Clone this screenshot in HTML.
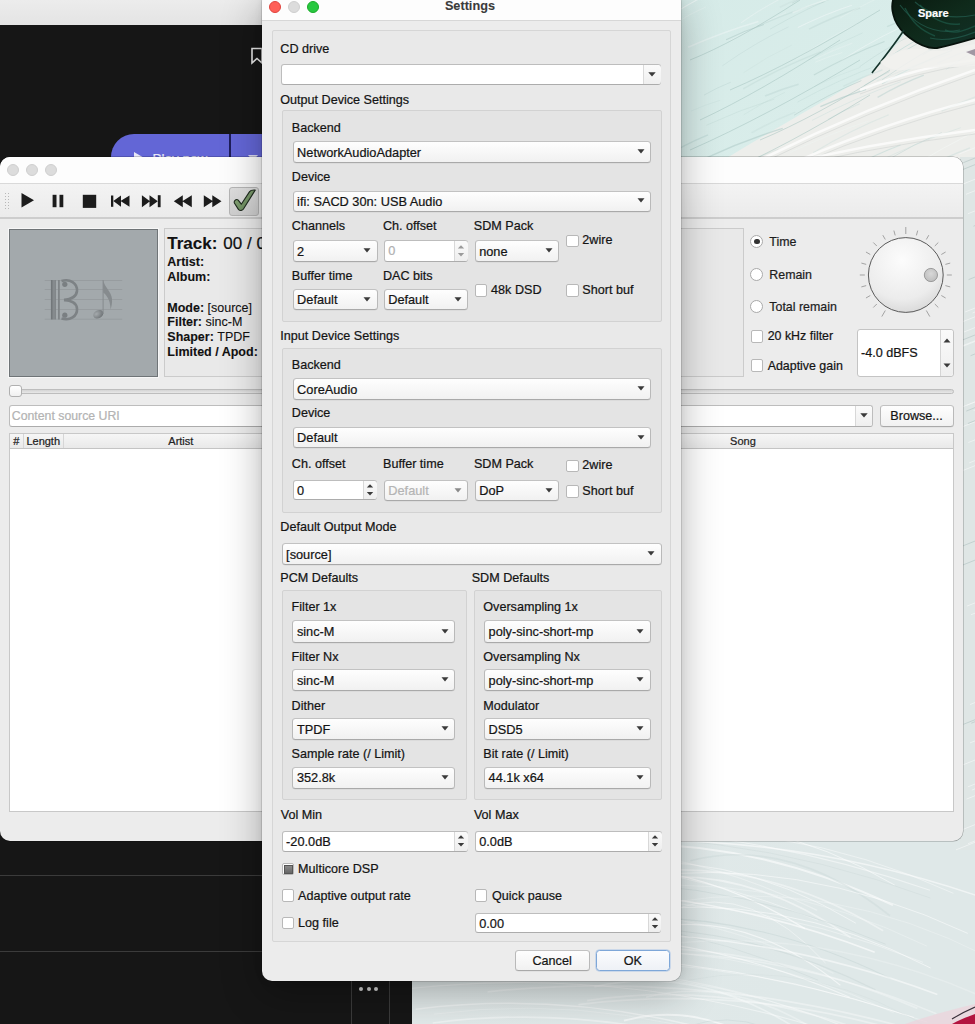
<!DOCTYPE html><html><head><meta charset="utf-8"><style>
html,body{margin:0;padding:0;width:975px;height:1024px;overflow:hidden;position:relative;background:#dfe9e8;font-family:"Liberation Sans",sans-serif}
.a{position:absolute}
.t{position:absolute;white-space:nowrap;line-height:20px;font-family:"Liberation Sans",sans-serif;-webkit-text-stroke:0.22px currentColor}
.cb{box-sizing:border-box;border:1px solid #b9b9b9;border-top-color:#c2c2c2;border-bottom-color:#a9a9a9;border-radius:3.5px;background:linear-gradient(#fefefe,#f1f1f1);box-shadow:0 0.5px 0.5px rgba(0,0,0,0.08)}
.ed{box-sizing:border-box;border:1px solid #bdbdbd;border-bottom-color:#acacac;border-radius:3px;background:#fff}
.ck{width:12.5px;height:12.5px;box-sizing:border-box;border:1px solid #b8b8b8;border-radius:2px;background:#fff}
</style></head><body>

<svg class="a" style="left:0;top:0" width="975" height="1024" viewBox="0 0 975 1024"><defs><linearGradient id="bgtop" x1="0" y1="0" x2="1" y2="1"><stop offset="0" stop-color="#d6ebe8"/><stop offset="1" stop-color="#dbeeeb"/></linearGradient><linearGradient id="bgbot" x1="0" y1="0" x2="1" y2="0.3"><stop offset="0" stop-color="#d9e3e3"/><stop offset="0.5" stop-color="#e4ebeb"/><stop offset="1" stop-color="#dfe8e8"/></linearGradient><linearGradient id="green" x1="0" y1="0" x2="1" y2="1"><stop offset="0" stop-color="#0a1a10"/><stop offset="0.5" stop-color="#0f2a1b"/><stop offset="1" stop-color="#123028"/></linearGradient></defs><rect x="0" y="0" width="975" height="1024" fill="url(#bgbot)"/><rect x="660" y="0" width="315" height="200" fill="#edeeeb"/><path d="M660 0H895C893 14 898 26 906 33L872 73C840 92 790 120 740 150C715 165 690 180 660 195Z" fill="url(#bgtop)"/><path d="M960 157V850H975V157Z" fill="#dfe6e5"/><path d="M757.1 26.4 q33.7 -14.9 67.3 -24.8" stroke="#b4cecb" stroke-width="1.2" fill="none" opacity="0.33"/><path d="M932.9 37.6 q15.3 -8.3 30.6 -13.9" stroke="#c4dbd8" stroke-width="1.0" fill="none" opacity="0.33"/><path d="M908.1 21.7 q19.8 -12.0 39.5 -20.0" stroke="#bcd6d3" stroke-width="1.0" fill="none" opacity="0.50"/><path d="M952.9 8.2 q40.4 -20.5 80.8 -34.1" stroke="#c4dbd8" stroke-width="1.2" fill="none" opacity="0.49"/><path d="M828.1 119.4 q15.8 -9.4 31.7 -15.6" stroke="#c4dbd8" stroke-width="1.1" fill="none" opacity="0.43"/><path d="M678.8 10.4 q19.2 -12.0 38.4 -20.0" stroke="#f6faf9" stroke-width="1.1" fill="none" opacity="0.57"/><path d="M937.0 63.3 q20.6 -9.8 41.1 -16.3" stroke="#c4dbd8" stroke-width="0.9" fill="none" opacity="0.33"/><path d="M808.5 60.1 q27.1 -16.3 54.2 -27.2" stroke="#bcd6d3" stroke-width="1.0" fill="none" opacity="0.34"/><path d="M887.1 26.6 q28.4 -12.3 56.8 -20.4" stroke="#bcd6d3" stroke-width="1.2" fill="none" opacity="0.57"/><path d="M922.6 54.9 q35.1 -21.0 70.2 -35.0" stroke="#b4cecb" stroke-width="0.7" fill="none" opacity="0.58"/><path d="M688.1 47.2 q35.2 -15.5 70.3 -25.8" stroke="#eef6f5" stroke-width="1.6" fill="none" opacity="0.53"/><path d="M906.6 49.8 q25.0 -15.5 50.1 -25.9" stroke="#bcd6d3" stroke-width="1.0" fill="none" opacity="0.63"/><path d="M843.3 86.4 q19.6 -9.9 39.2 -16.5" stroke="#c4dbd8" stroke-width="1.5" fill="none" opacity="0.44"/><path d="M809.0 29.1 q25.6 -12.9 51.1 -21.4" stroke="#c4dbd8" stroke-width="1.5" fill="none" opacity="0.59"/><path d="M743.5 72.7 q24.2 -16.6 48.3 -27.6" stroke="#c4dbd8" stroke-width="0.8" fill="none" opacity="0.35"/><path d="M729.6 40.8 q28.3 -16.9 56.5 -28.1" stroke="#eef6f5" stroke-width="0.7" fill="none" opacity="0.40"/><path d="M820.4 106.7 q22.9 -10.5 45.7 -17.4" stroke="#b4cecb" stroke-width="1.3" fill="none" opacity="0.63"/><path d="M881.9 79.9 q40.8 -28.8 81.6 -48.0" stroke="#b4cecb" stroke-width="1.0" fill="none" opacity="0.44"/><path d="M691.1 111.0 q14.5 -6.4 29.0 -10.7" stroke="#c4dbd8" stroke-width="0.7" fill="none" opacity="0.45"/><path d="M840.2 17.9 q30.9 -18.0 61.8 -29.9" stroke="#eef6f5" stroke-width="0.7" fill="none" opacity="0.51"/><path d="M722.4 65.8 q33.1 -23.4 66.2 -39.0" stroke="#b4cecb" stroke-width="0.7" fill="none" opacity="0.43"/><path d="M914.7 173.8 q27.6 -15.6 55.3 -26.0" stroke="#bcd6d3" stroke-width="1.3" fill="none" opacity="0.35"/><path d="M882.1 83.8 q35.0 -20.1 70.0 -33.5" stroke="#c4dbd8" stroke-width="1.1" fill="none" opacity="0.63"/><path d="M704.0 95.1 q13.4 -7.7 26.8 -12.9" stroke="#bcd6d3" stroke-width="0.9" fill="none" opacity="0.54"/><path d="M770.0 29.2 q37.6 -21.8 75.2 -36.3" stroke="#b4cecb" stroke-width="0.8" fill="none" opacity="0.42"/><path d="M903.5 172.4 q40.2 -26.6 80.4 -44.4" stroke="#f6faf9" stroke-width="0.8" fill="none" opacity="0.56"/><path d="M815.3 62.2 q13.4 -5.8 26.9 -9.6" stroke="#eef6f5" stroke-width="0.8" fill="none" opacity="0.47"/><path d="M841.5 60.2 q38.8 -24.7 77.6 -41.2" stroke="#eef6f5" stroke-width="1.0" fill="none" opacity="0.63"/><path d="M726.1 39.7 q18.9 -9.1 37.8 -15.2" stroke="#b4cecb" stroke-width="1.2" fill="none" opacity="0.64"/><path d="M660.6 159.1 q23.7 -14.5 47.4 -24.2" stroke="#bcd6d3" stroke-width="1.4" fill="none" opacity="0.62"/><path d="M885.0 83.7 q18.3 -12.0 36.6 -20.0" stroke="#eef6f5" stroke-width="1.5" fill="none" opacity="0.33"/><path d="M876.5 81.1 q36.7 -16.3 73.3 -27.2" stroke="#c4dbd8" stroke-width="0.7" fill="none" opacity="0.36"/><path d="M705.3 158.3 q38.7 -18.0 77.4 -29.9" stroke="#b4cecb" stroke-width="1.3" fill="none" opacity="0.64"/><path d="M765.1 96.0 q16.8 -7.1 33.5 -11.8" stroke="#bcd6d3" stroke-width="1.5" fill="none" opacity="0.48"/><path d="M790.1 152.6 q39.4 -19.0 78.7 -31.7" stroke="#eef6f5" stroke-width="1.1" fill="none" opacity="0.37"/><path d="M889.1 57.0 q30.2 -20.2 60.4 -33.7" stroke="#bcd6d3" stroke-width="1.0" fill="none" opacity="0.62"/><path d="M797.4 102.1 q41.9 -22.9 83.8 -38.1" stroke="#b4cecb" stroke-width="0.8" fill="none" opacity="0.35"/><path d="M813.2 152.7 q37.7 -22.7 75.5 -37.9" stroke="#c4dbd8" stroke-width="1.1" fill="none" opacity="0.36"/><path d="M877.6 97.4 q23.1 -13.3 46.2 -22.2" stroke="#b4cecb" stroke-width="1.4" fill="none" opacity="0.47"/><path d="M925.0 9.9 q18.7 -8.1 37.4 -13.5" stroke="#bcd6d3" stroke-width="1.2" fill="none" opacity="0.48"/><path d="M888.0 159.7 q26.9 -16.2 53.8 -27.1" stroke="#b4cecb" stroke-width="0.8" fill="none" opacity="0.51"/><path d="M743.2 88.9 q38.7 -22.2 77.5 -37.0" stroke="#c4dbd8" stroke-width="1.5" fill="none" opacity="0.54"/><path d="M942.7 45.4 q30.7 -21.6 61.4 -36.0" stroke="#f6faf9" stroke-width="0.7" fill="none" opacity="0.35"/><path d="M792.6 12.7 q20.3 -9.0 40.6 -15.0" stroke="#eef6f5" stroke-width="1.5" fill="none" opacity="0.57"/><path d="M706.3 125.3 q34.0 -15.7 67.9 -26.2" stroke="#c4dbd8" stroke-width="0.8" fill="none" opacity="0.64"/><path d="M945.8 69.7 q28.3 -20.3 56.7 -33.9" stroke="#c4dbd8" stroke-width="1.0" fill="none" opacity="0.36"/><path d="M814.7 59.3 q18.9 -9.7 37.7 -16.2" stroke="#eef6f5" stroke-width="1.2" fill="none" opacity="0.31"/><path d="M792.1 3.2 q23.3 -14.1 46.5 -23.6" stroke="#b4cecb" stroke-width="0.7" fill="none" opacity="0.64"/><path d="M935.6 40.0 q41.0 -18.2 82.0 -30.4" stroke="#eef6f5" stroke-width="1.4" fill="none" opacity="0.31"/><path d="M741.1 22.7 q26.2 -18.2 52.4 -30.3" stroke="#eef6f5" stroke-width="1.1" fill="none" opacity="0.44"/><path d="M814.4 86.6 q23.1 -11.7 46.3 -19.4" stroke="#c4dbd8" stroke-width="0.7" fill="none" opacity="0.45"/><path d="M941.5 111.0 q38.6 -17.2 77.1 -28.6" stroke="#c4dbd8" stroke-width="1.5" fill="none" opacity="0.32"/><path d="M796.1 59.4 q30.5 -21.3 60.9 -35.5" stroke="#eef6f5" stroke-width="0.6" fill="none" opacity="0.52"/><path d="M872.9 164.2 q44.0 -21.9 88.0 -36.6" stroke="#c4dbd8" stroke-width="0.9" fill="none" opacity="0.37"/><path d="M751.5 132.9 q21.9 -12.5 43.8 -20.8" stroke="#c4dbd8" stroke-width="1.4" fill="none" opacity="0.39"/><path d="M958.3 6.5 q13.1 -7.5 26.2 -12.5" stroke="#c4dbd8" stroke-width="0.8" fill="none" opacity="0.48"/><path d="M794.1 115.2 q33.6 -20.7 67.3 -34.6" stroke="#b4cecb" stroke-width="1.0" fill="none" opacity="0.59"/><path d="M812.0 120.4 q44.4 -23.2 88.9 -38.7" stroke="#c4dbd8" stroke-width="0.9" fill="none" opacity="0.44"/><path d="M676.3 22.7 q14.8 -9.5 29.6 -15.8" stroke="#eef6f5" stroke-width="0.7" fill="none" opacity="0.45"/><path d="M859.6 66.7 q28.9 -20.6 57.9 -34.3" stroke="#b4cecb" stroke-width="0.9" fill="none" opacity="0.38"/><path d="M797.8 27.6 q27.0 -13.5 54.0 -22.4" stroke="#eef6f5" stroke-width="1.1" fill="none" opacity="0.64"/><path d="M733.3 169.0 q22.6 -11.9 45.1 -19.8" stroke="#bcd6d3" stroke-width="0.7" fill="none" opacity="0.42"/><path d="M743.7 114.8 q20.6 -13.4 41.1 -22.4" stroke="#bcd6d3" stroke-width="0.7" fill="none" opacity="0.39"/><path d="M779.9 7.3 q13.2 -6.8 26.5 -11.3" stroke="#c4dbd8" stroke-width="1.6" fill="none" opacity="0.33"/><path d="M916.0 27.2 q41.5 -27.2 83.0 -45.3" stroke="#b4cecb" stroke-width="0.9" fill="none" opacity="0.44"/><path d="M955.4 26.2 q36.0 -22.1 72.1 -36.8" stroke="#bcd6d3" stroke-width="1.3" fill="none" opacity="0.59"/><path d="M813.9 75.1 q35.3 -20.2 70.6 -33.6" stroke="#b4cecb" stroke-width="1.2" fill="none" opacity="0.56"/><path d="M903.9 2.8 q34.8 -23.0 69.6 -38.3" stroke="#c4dbd8" stroke-width="0.6" fill="none" opacity="0.33"/><path d="M851.1 167.9 q24.7 -13.7 49.5 -22.9" stroke="#bcd6d3" stroke-width="1.2" fill="none" opacity="0.52"/><path d="M864.2 85.6 q12.6 -8.3 25.2 -13.9" stroke="#b4cecb" stroke-width="0.7" fill="none" opacity="0.61"/><path d="M690 150 Q765.0 117.0 860 60" stroke="#9fbdb9" stroke-width="0.8" fill="none" opacity="0.6"/><path d="M700 120 Q760.0 92.0 840 40" stroke="#9fbdb9" stroke-width="0.8" fill="none" opacity="0.6"/><path d="M730 90 Q795.0 62.0 880 10" stroke="#9fbdb9" stroke-width="0.8" fill="none" opacity="0.6"/><path d="M690 60 Q735.0 42.0 800 0" stroke="#9fbdb9" stroke-width="0.8" fill="none" opacity="0.6"/><path d="M760 140 Q815.0 117.0 890 70" stroke="#9fbdb9" stroke-width="0.8" fill="none" opacity="0.6"/><path d="M720 175 Q785.0 147.0 870 95" stroke="#9fbdb9" stroke-width="0.8" fill="none" opacity="0.6"/><path d="M760 160 Q867.5 107.0 975 70" stroke="#ffffff" stroke-width="2.5" fill="none" opacity="0.7"/><path d="M760 164 Q867.5 111.0 975 74" stroke="#cfd2d0" stroke-width="0.8" fill="none" opacity="0.7"/><path d="M800 160 Q887.5 122.0 975 100" stroke="#ffffff" stroke-width="2.5" fill="none" opacity="0.7"/><path d="M800 164 Q887.5 126.0 975 104" stroke="#cfd2d0" stroke-width="0.8" fill="none" opacity="0.7"/><path d="M740 175 Q857.5 144.5 975 130" stroke="#ffffff" stroke-width="2.5" fill="none" opacity="0.7"/><path d="M740 179 Q857.5 148.5 975 134" stroke="#cfd2d0" stroke-width="0.8" fill="none" opacity="0.7"/><path d="M860 90 Q917.5 67.0 975 60" stroke="#ffffff" stroke-width="2.5" fill="none" opacity="0.7"/><path d="M860 94 Q917.5 71.0 975 64" stroke="#cfd2d0" stroke-width="0.8" fill="none" opacity="0.7"/><path d="M623.7 830.1 Q759.2 805.1 894.8 885.1" stroke="#ffffff" stroke-width="0.9" fill="none" opacity="0.60"/><path d="M469.2 835.2 Q699.6 810.2 930.0 890.2" stroke="#ffffff" stroke-width="1.1" fill="none" opacity="0.47"/><path d="M605.1 838.3 Q779.3 813.3 953.4 893.3" stroke="#ffffff" stroke-width="0.8" fill="none" opacity="0.52"/><path d="M499.5 843.0 Q714.9 818.0 930.3 898.0" stroke="#cbd8d8" stroke-width="0.8" fill="none" opacity="0.52"/><path d="M545.7 846.7 Q770.1 821.7 994.5 901.7" stroke="#ffffff" stroke-width="1.4" fill="none" opacity="0.54"/><path d="M555.0 850.2 Q723.9 825.2 892.9 905.2" stroke="#ffffff" stroke-width="1.8" fill="none" opacity="0.57"/><path d="M493.5 855.4 Q655.3 830.4 817.2 910.4" stroke="#ffffff" stroke-width="1.2" fill="none" opacity="0.31"/><path d="M690.4 860.7 Q790.2 835.7 889.9 915.7" stroke="#cbd8d8" stroke-width="1.7" fill="none" opacity="0.44"/><path d="M422.4 865.3 Q620.2 840.3 818.1 920.3" stroke="#ffffff" stroke-width="1.0" fill="none" opacity="0.39"/><path d="M589.5 868.2 Q722.7 843.2 855.9 923.2" stroke="#ffffff" stroke-width="0.9" fill="none" opacity="0.55"/><path d="M545.8 873.6 Q675.4 848.6 805.0 928.6" stroke="#ffffff" stroke-width="1.4" fill="none" opacity="0.63"/><path d="M618.2 875.8 Q750.7 850.8 883.2 930.8" stroke="#ffffff" stroke-width="1.6" fill="none" opacity="0.41"/><path d="M625.2 878.4 Q796.5 853.4 967.8 933.4" stroke="#ffffff" stroke-width="0.8" fill="none" opacity="0.63"/><path d="M622.0 882.6 Q736.3 857.6 850.6 937.6" stroke="#ffffff" stroke-width="1.8" fill="none" opacity="0.44"/><path d="M508.2 889.2 Q696.9 864.2 885.6 944.2" stroke="#cbd8d8" stroke-width="0.9" fill="none" opacity="0.60"/><path d="M598.6 891.2 Q762.8 866.2 927.0 946.2" stroke="#f6f9f9" stroke-width="0.9" fill="none" opacity="0.39"/><path d="M457.0 897.2 Q665.8 872.2 874.7 952.2" stroke="#ffffff" stroke-width="1.6" fill="none" opacity="0.61"/><path d="M674.0 901.9 Q831.1 876.9 988.1 956.9" stroke="#ffffff" stroke-width="0.7" fill="none" opacity="0.37"/><path d="M523.3 907.3 Q723.1 882.3 923.0 962.3" stroke="#f6f9f9" stroke-width="0.9" fill="none" opacity="0.53"/><path d="M678.0 908.0 Q751.7 883.0 825.5 963.0" stroke="#ffffff" stroke-width="0.9" fill="none" opacity="0.45"/><path d="M621.6 913.0 Q776.1 888.0 930.6 968.0" stroke="#ffffff" stroke-width="1.0" fill="none" opacity="0.53"/><path d="M518.3 918.4 Q675.9 893.4 833.5 973.4" stroke="#f6f9f9" stroke-width="1.2" fill="none" opacity="0.33"/><path d="M565.1 923.6 Q727.9 898.6 890.6 978.6" stroke="#cbd8d8" stroke-width="1.1" fill="none" opacity="0.65"/><path d="M457.7 925.2 Q637.9 900.2 818.1 980.2" stroke="#cbd8d8" stroke-width="1.0" fill="none" opacity="0.49"/><path d="M642.8 930.3 Q741.6 905.3 840.4 985.3" stroke="#ffffff" stroke-width="1.1" fill="none" opacity="0.56"/><path d="M557.3 934.7 Q716.3 909.7 875.4 989.7" stroke="#cbd8d8" stroke-width="1.2" fill="none" opacity="0.56"/><path d="M508.0 939.5 Q722.7 914.5 937.4 994.5" stroke="#ffffff" stroke-width="1.6" fill="none" opacity="0.52"/><path d="M481.3 942.3 Q665.5 917.3 849.7 997.3" stroke="#ffffff" stroke-width="1.1" fill="none" opacity="0.53"/><path d="M644.3 946.8 Q819.0 921.8 993.6 1001.8" stroke="#f6f9f9" stroke-width="1.5" fill="none" opacity="0.31"/><path d="M542.0 953.4 Q729.7 928.4 917.4 1008.4" stroke="#ffffff" stroke-width="1.7" fill="none" opacity="0.33"/><path d="M558.4 957.7 Q726.0 932.7 893.6 1012.7" stroke="#ffffff" stroke-width="0.7" fill="none" opacity="0.39"/><path d="M556.7 958.8 Q746.6 933.8 936.4 1013.8" stroke="#ffffff" stroke-width="1.5" fill="none" opacity="0.33"/><path d="M437.7 962.4 Q675.8 937.4 913.9 1017.4" stroke="#ffffff" stroke-width="1.0" fill="none" opacity="0.53"/><path d="M475.5 967.1 Q701.4 942.1 927.3 1022.1" stroke="#ffffff" stroke-width="1.0" fill="none" opacity="0.33"/><path d="M457.5 974.6 Q654.8 949.6 852.2 1029.6" stroke="#ffffff" stroke-width="1.2" fill="none" opacity="0.30"/><path d="M483.6 979.0 Q673.4 954.0 863.3 1034.0" stroke="#f6f9f9" stroke-width="0.9" fill="none" opacity="0.47"/><path d="M688.2 980.2 Q814.6 955.2 940.9 1035.2" stroke="#cbd8d8" stroke-width="0.8" fill="none" opacity="0.32"/><path d="M594.2 986.9 Q705.2 961.9 816.2 1041.9" stroke="#f6f9f9" stroke-width="1.7" fill="none" opacity="0.53"/><path d="M410.2 988.5 Q638.9 963.5 867.6 1043.5" stroke="#ffffff" stroke-width="1.1" fill="none" opacity="0.43"/><path d="M487.6 991.8 Q728.3 966.8 969.0 1046.8" stroke="#ffffff" stroke-width="1.8" fill="none" opacity="0.37"/><path d="M646.0 997.2 Q746.1 972.2 846.2 1052.2" stroke="#f6f9f9" stroke-width="1.7" fill="none" opacity="0.39"/><path d="M587.1 1000.6 Q754.5 975.6 922.0 1055.6" stroke="#f6f9f9" stroke-width="1.7" fill="none" opacity="0.47"/><path d="M578.4 1004.6 Q781.4 979.6 984.4 1059.6" stroke="#ffffff" stroke-width="1.8" fill="none" opacity="0.37"/><path d="M415.6 1009.2 Q613.8 984.2 812.0 1064.2" stroke="#ffffff" stroke-width="1.5" fill="none" opacity="0.46"/><path d="M434.0 1014.1 Q624.9 989.1 815.9 1069.1" stroke="#f6f9f9" stroke-width="0.8" fill="none" opacity="0.42"/><path d="M623.9 1020.7 Q715.1 995.7 806.4 1075.7" stroke="#ffffff" stroke-width="1.8" fill="none" opacity="0.59"/><path d="M432.7 1023.0 Q624.2 998.0 815.6 1078.0" stroke="#ffffff" stroke-width="1.7" fill="none" opacity="0.42"/><path d="M689.3 1025.9 Q765.4 1000.9 841.5 1080.9" stroke="#cbd8d8" stroke-width="1.0" fill="none" opacity="0.57"/><path d="M426.3 1032.8 Q683.7 1007.8 941.1 1087.8" stroke="#f6f9f9" stroke-width="1.7" fill="none" opacity="0.43"/><path d="M509.3 1034.6 Q744.3 1009.6 979.4 1089.6" stroke="#ffffff" stroke-width="0.9" fill="none" opacity="0.52"/><path d="M521.4 1040.5 Q698.3 1015.5 875.1 1095.5" stroke="#ffffff" stroke-width="1.7" fill="none" opacity="0.32"/><path d="M624.2 1043.2 Q801.9 1018.2 979.7 1098.2" stroke="#cbd8d8" stroke-width="1.0" fill="none" opacity="0.43"/><path d="M413.1 1050.2 Q681.2 1025.2 949.3 1105.2" stroke="#cbd8d8" stroke-width="1.0" fill="none" opacity="0.62"/><path d="M578.7 1053.5 Q769.9 1028.5 961.1 1108.5" stroke="#ffffff" stroke-width="0.9" fill="none" opacity="0.31"/><path d="M687.0 1056.7 Q838.9 1031.7 990.8 1111.7" stroke="#ffffff" stroke-width="1.7" fill="none" opacity="0.58"/><path d="M439.8 1062.3 Q669.6 1037.3 899.3 1117.3" stroke="#ffffff" stroke-width="1.5" fill="none" opacity="0.58"/><path d="M631.8 1066.5 Q776.6 1041.5 921.5 1121.5" stroke="#cbd8d8" stroke-width="1.2" fill="none" opacity="0.60"/><path d="M578.7 1070.5 Q740.5 1045.5 902.4 1125.5" stroke="#ffffff" stroke-width="0.9" fill="none" opacity="0.56"/><path d="M410.2 1071.9 Q660.3 1046.9 910.5 1126.9" stroke="#cbd8d8" stroke-width="1.1" fill="none" opacity="0.36"/><path d="M421.6 1076.2 Q673.3 1051.2 924.9 1131.2" stroke="#f6f9f9" stroke-width="1.2" fill="none" opacity="0.33"/><path d="M969.2 462.9 l20 -8" stroke="#f5f7f7" stroke-width="1" opacity="0.7"/><path d="M957.7 472.6 l20 -8" stroke="#f5f7f7" stroke-width="1" opacity="0.7"/><path d="M970.0 742.9 l20 -8" stroke="#f5f7f7" stroke-width="1" opacity="0.7"/><path d="M970.6 355.7 l20 -8" stroke="#b9c9c8" stroke-width="1" opacity="0.7"/><path d="M966.3 411.1 l20 -8" stroke="#b9c9c8" stroke-width="1" opacity="0.7"/><path d="M959.0 323.2 l20 -8" stroke="#f5f7f7" stroke-width="1" opacity="0.7"/><path d="M959.7 346.9 l20 -8" stroke="#f5f7f7" stroke-width="1" opacity="0.7"/><path d="M961.5 427.2 l20 -8" stroke="#f5f7f7" stroke-width="1" opacity="0.7"/><path d="M965.1 312.0 l20 -8" stroke="#f5f7f7" stroke-width="1" opacity="0.7"/><path d="M968.1 843.7 l20 -8" stroke="#f5f7f7" stroke-width="1" opacity="0.7"/><path d="M955.1 768.0 l20 -8" stroke="#f5f7f7" stroke-width="1" opacity="0.7"/><path d="M971.8 790.1 l20 -8" stroke="#f5f7f7" stroke-width="1" opacity="0.7"/><path d="M972.5 313.0 l20 -8" stroke="#f5f7f7" stroke-width="1" opacity="0.7"/><path d="M958.8 831.1 l20 -8" stroke="#f5f7f7" stroke-width="1" opacity="0.7"/><path d="M973.6 410.6 l20 -8" stroke="#f5f7f7" stroke-width="1" opacity="0.7"/><path d="M964.0 332.0 l20 -8" stroke="#f5f7f7" stroke-width="1" opacity="0.7"/><path d="M957.1 567.3 l20 -8" stroke="#b9c9c8" stroke-width="1" opacity="0.7"/><path d="M959.4 408.1 l20 -8" stroke="#f5f7f7" stroke-width="1" opacity="0.7"/><path d="M955.9 849.9 l20 -8" stroke="#f5f7f7" stroke-width="1" opacity="0.7"/><path d="M967.0 606.1 l20 -8" stroke="#f5f7f7" stroke-width="1" opacity="0.7"/><path d="M971.3 723.2 l20 -8" stroke="#b9c9c8" stroke-width="1" opacity="0.7"/><path d="M968.6 279.6 l20 -8" stroke="#b9c9c8" stroke-width="1" opacity="0.7"/><path d="M956.6 172.0 l20 -8" stroke="#b9c9c8" stroke-width="1" opacity="0.7"/><path d="M966.0 194.3 l20 -8" stroke="#f5f7f7" stroke-width="1" opacity="0.7"/><path d="M970.9 614.8 l20 -8" stroke="#f5f7f7" stroke-width="1" opacity="0.7"/><path d="M967.8 213.8 l20 -8" stroke="#f5f7f7" stroke-width="1" opacity="0.7"/><path d="M963.0 339.8 l20 -8" stroke="#b9c9c8" stroke-width="1" opacity="0.7"/><path d="M968.4 442.5 l20 -8" stroke="#f5f7f7" stroke-width="1" opacity="0.7"/><path d="M961.2 546.6 l20 -8" stroke="#b9c9c8" stroke-width="1" opacity="0.7"/><path d="M963.3 162.7 l20 -8" stroke="#b9c9c8" stroke-width="1" opacity="0.7"/><path d="M967.9 423.5 l20 -8" stroke="#b9c9c8" stroke-width="1" opacity="0.7"/><path d="M959.1 154.1 l20 -8" stroke="#f5f7f7" stroke-width="1" opacity="0.7"/><path d="M963.5 724.3 l20 -8" stroke="#b9c9c8" stroke-width="1" opacity="0.7"/><path d="M966.6 405.3 l20 -8" stroke="#f5f7f7" stroke-width="1" opacity="0.7"/><path d="M957.6 186.2 l20 -8" stroke="#f5f7f7" stroke-width="1" opacity="0.7"/><path d="M967.8 786.9 l20 -8" stroke="#f5f7f7" stroke-width="1" opacity="0.7"/><path d="M966.5 799.1 l20 -8" stroke="#f5f7f7" stroke-width="1" opacity="0.7"/><path d="M957.9 348.3 l20 -8" stroke="#f5f7f7" stroke-width="1" opacity="0.7"/><path d="M973.5 226.2 l20 -8" stroke="#b9c9c8" stroke-width="1" opacity="0.7"/><path d="M970.1 704.5 l20 -8" stroke="#f5f7f7" stroke-width="1" opacity="0.7"/><path d="M893 0C891 8 893 14 895 20C898 27 903 33 910 38C918 44 927 49 937 48C947 46 958 43 975 38V0Z" fill="url(#green)"/><path d="M893 0C891 8 893 14 895 20C898 27 903 33 910 38C918 44 927 49 937 48C947 46 958 43 975 38" stroke="#07120c" stroke-width="1.8" fill="none"/><path d="M900 5C915 25 935 35 960 30M915 2C930 15 950 20 975 15M930 38C945 42 960 38 975 32" stroke="#2a6e5e" stroke-width="1.2" fill="none" opacity="0.55"/><path d="M905 8C912 22 920 30 935 36M920 5C930 18 945 26 960 24M945 30C955 35 965 30 975 26" stroke="#1e5a48" stroke-width="1.5" fill="none" opacity="0.7"/><path d="M904 30C895 44 882 60 872 73" stroke="#14332a" stroke-width="1.6" fill="none"/><path d="M880 62C895 50 912 46 928 50C945 54 960 46 975 44V66C955 68 930 66 905 70C895 71 885 68 880 62Z" fill="#f1f1ee" opacity="0.85"/><path d="M966 52L975 49V56Z" fill="#5e4c66" opacity="0.55"/><path d="M905 1024C925 1017 950 1010 975 1004V1024Z" fill="#ecd3db" opacity="0.7"/><path d="M952 1024C959 1020 967 1017 975 1014V1024Z" fill="#b3143f"/><path d="M952 1019C960 1014 968 1010 975 1007" stroke="#39303a" stroke-width="1.2" fill="none"/></svg>
<div class="t" style="left:918px;top:2.5px;font-size:11px;font-weight:bold;color:#fff">Spare</div>
<div class="a" style="left:0;top:0;width:412px;height:25px;background:linear-gradient(#ececec,#e4e4e4)"></div>
<div class="a" style="left:0;top:25px;width:412px;height:999px;background:#161616"></div>
<div class="a" style="left:0;top:875px;width:412px;height:1px;background:#3b3b3b"></div>
<div class="a" style="left:0;top:951px;width:412px;height:1px;background:#3b3b3b"></div>
<div class="a" style="left:351px;top:952px;width:1px;height:72px;background:#3b3b3b"></div>
<div class="a" style="left:389px;top:952px;width:1px;height:72px;background:#3b3b3b"></div>
<div class="a" style="left:359.2px;top:987.3px;width:4px;height:4px;border-radius:50%;background:#cfcfcf"></div>
<div class="a" style="left:366.7px;top:987.3px;width:4px;height:4px;border-radius:50%;background:#cfcfcf"></div>
<div class="a" style="left:374.2px;top:987.3px;width:4px;height:4px;border-radius:50%;background:#cfcfcf"></div>
<svg class="a" style="left:250px;top:47px" width="14" height="18" viewBox="0 0 14 18"><path d="M2 1.5H12V16L7 11.5L2 16Z" fill="none" stroke="#e8e8e8" stroke-width="1.6"/></svg>
<div class="a" style="left:111px;top:134px;width:170px;height:46px;border-radius:23px 0 0 23px;background:#6366d6"></div>
<div class="a" style="left:229px;top:134px;width:1.5px;height:30px;background:#1e1e5a"></div>
<svg class="a" style="left:133px;top:152px" width="14" height="14" viewBox="0 0 14 14"><path d="M1 0L13 7L1 14Z" fill="#e9e9f7"/></svg>
<div class="t" style="left:152.5px;top:148.5px;font-size:13.5px;color:#e9e9f7">Play now</div>
<svg class="a" style="left:248px;top:155px" width="10" height="6" viewBox="0 0 10 6"><path d="M0 0H10L5 6Z" fill="#d9d9f0"/></svg>
<div class="a" style="left:0px;top:157px;width:963px;height:684px;border-radius:10px;background:#ececec;overflow:hidden;box-shadow:0 0 0 0.5px rgba(0,0,0,0.35)">
</div>
<div class="a" style="left:0;top:157px;width:963px;height:26px;border-radius:10px 10px 0 0;background:#fdfdfd"></div>
<div class="a" style="left:0;top:183px;width:963px;height:1px;background:#d9d9d9"></div>
<div class="a" style="left:7px;top:164px;width:12px;height:12px;border-radius:50%;background:#dcdcdc;box-sizing:border-box;border:0.5px solid #cfcfcf"></div>
<div class="a" style="left:26px;top:164px;width:12px;height:12px;border-radius:50%;background:#dcdcdc;box-sizing:border-box;border:0.5px solid #cfcfcf"></div>
<div class="a" style="left:44.7px;top:164px;width:12px;height:12px;border-radius:50%;background:#dcdcdc;box-sizing:border-box;border:0.5px solid #cfcfcf"></div>
<div class="a" style="left:0;top:184px;width:963px;height:33px;background:linear-gradient(#f3f3f3,#ebebeb)"></div>
<div class="a" style="left:0;top:217px;width:963px;height:1.5px;background:#cdcdcd"></div>
<svg class="a" style="left:4px;top:192px" width="6" height="17" viewBox="0 0 6 17"><rect x="1" y="1" width="1" height="1" fill="#b8b8b8"/><rect x="1" y="4" width="1" height="1" fill="#b8b8b8"/><rect x="1" y="7" width="1" height="1" fill="#b8b8b8"/><rect x="1" y="10" width="1" height="1" fill="#b8b8b8"/><rect x="1" y="13" width="1" height="1" fill="#b8b8b8"/><rect x="1" y="16" width="1" height="1" fill="#b8b8b8"/><rect x="4" y="1" width="1" height="1" fill="#b8b8b8"/><rect x="4" y="4" width="1" height="1" fill="#b8b8b8"/><rect x="4" y="7" width="1" height="1" fill="#b8b8b8"/><rect x="4" y="10" width="1" height="1" fill="#b8b8b8"/><rect x="4" y="13" width="1" height="1" fill="#b8b8b8"/><rect x="4" y="16" width="1" height="1" fill="#b8b8b8"/></svg>
<svg class="a" style="left:0;top:185px" width="262" height="32" viewBox="0 185 262 32"><path d="M21.5 193L34 200.3L21.5 207.6Z" fill="#1c1c1c"/><rect x="52.6" y="194.8" width="3.9" height="12.4" fill="#1c1c1c"/><rect x="59.5" y="194.8" width="3.8" height="12.4" fill="#1c1c1c"/><rect x="82.8" y="194.8" width="13.4" height="13.1" fill="#1c1c1c"/><rect x="111" y="195.5" width="2.3" height="11.3" fill="#1c1c1c"/><path d="M113.3 201.1L121 195.5V206.8Z M120.5 201.1L129.5 195.5V206.8Z" fill="#1c1c1c"/><rect x="157.8" y="195.2" width="2.8" height="12" fill="#1c1c1c"/><path d="M141.9 195.2L150 201.2L141.9 207.2Z M149.5 195.2L157.8 201.2L149.5 207.2Z" fill="#1c1c1c"/><path d="M173.8 201.2L182.8 195.2V207.2Z M182.3 201.2L191.8 195.2V207.2Z" fill="#1c1c1c"/><path d="M203.8 195.2L213 201.2L203.8 207.2Z M212.3 195.2L221.5 201.2L212.3 207.2Z" fill="#1c1c1c"/></svg>
<div class="a" style="left:229.2px;top:187.2px;width:29.4px;height:28.6px;box-sizing:border-box;border:1px solid #b5b5b5;border-radius:3px;background:linear-gradient(#dedede,#cfcfcf)"></div>
<svg class="a" style="left:226px;top:184px" width="36" height="34" viewBox="226 184 36 34"><defs><linearGradient id="ckg" x1="0" y1="0" x2="1" y2="1"><stop offset="0" stop-color="#8fae7f"/><stop offset="1" stop-color="#5f7f52"/></linearGradient></defs><path d="M234.2 202.8C233.8 200.3 236.5 198.6 238.2 200.1L241.3 204.2L249.6 191.6C250.5 190.3 252.3 189.9 255.2 190.1L243.6 208.8C242.6 210.6 240 211 238.6 209.6Z" fill="url(#ckg)" stroke="#1e2a1e" stroke-width="1.1" stroke-linejoin="round"/></svg>
<div class="a" style="left:9px;top:229px;width:149px;height:148px;box-sizing:border-box;border:1.5px solid #6f7477;background:#a3a9ac;box-shadow:0 0 0 1px #f7f7f7"></div>
<svg class="a" style="left:40px;top:275px" width="90" height="50" viewBox="40 275 90 50"><defs><linearGradient id="barg" x1="0" x2="1"><stop offset="0" stop-color="#6c7174"/><stop offset="0.6" stop-color="#8a8f92"/><stop offset="1" stop-color="#7a7f82"/></linearGradient><radialGradient id="headg" cx="0.35" cy="0.35" r="0.7"><stop offset="0" stop-color="#a5aaad"/><stop offset="1" stop-color="#6f7477"/></radialGradient></defs><rect x="44.7" y="280" width="77.5" height="0.7" fill="#92979a"/><rect x="44.7" y="289.3" width="77.5" height="0.7" fill="#92979a"/><rect x="44.7" y="299.3" width="77.5" height="0.7" fill="#92979a"/><rect x="44.7" y="309" width="77.5" height="0.7" fill="#92979a"/><rect x="44.7" y="318.8" width="77.5" height="0.7" fill="#92979a"/><rect x="50.9" y="280" width="5" height="39.5" fill="url(#barg)"/><rect x="58" y="280" width="1.8" height="39.5" fill="#7f8487"/><path d="M61.5 281 C70 278.5 77.5 283 77 291 C76.5 296 73 299 64 300" fill="none" stroke="#7d8285" stroke-width="2.6"/><path d="M61.5 318.5 C70 321 77.5 316.5 77 308.5 C76.5 303.5 73 300.5 64 300" fill="none" stroke="#7d8285" stroke-width="2.6"/><circle cx="64.8" cy="284.3" r="2.6" fill="#7a7f82"/><circle cx="64.8" cy="315.2" r="2.6" fill="#7a7f82"/><ellipse cx="98.3" cy="314.3" rx="5.3" ry="3.9" fill="url(#headg)" transform="rotate(-28 98.3 314.3)"/><rect x="102.6" y="280" width="1" height="34" fill="#868b8e"/><path d="M103 280 C104.5 287 111.5 292 112 299 C112.3 303 111.5 306.5 110.5 309.5 C110.6 303 108.5 296.5 103.2 292.5Z" fill="#868b8e"/></svg>
<div class="a" style="left:164px;top:228px;width:580px;height:149px;box-sizing:border-box;border:1px solid #cbcbcb;background:#e9e9e9"></div>
<div class="t" style="left:167.30px;top:234.38px;font-size:17px;font-weight:bold;-webkit-text-stroke:0.1px currentColor;color:#111;">Track:</div>
<div class="t" style="left:223.30px;top:234.38px;font-size:17px;color:#111;">00 / 0</div>
<div class="t" style="left:167.30px;top:252.27px;font-size:12.5px;font-weight:bold;-webkit-text-stroke:0.1px currentColor;color:#111;">Artist:</div>
<div class="t" style="left:167.30px;top:267.17px;font-size:12.5px;font-weight:bold;-webkit-text-stroke:0.1px currentColor;color:#111;">Album:</div>
<div class="t" style="left:167.30px;top:297.57px;font-size:12.5px;font-weight:bold;-webkit-text-stroke:0.1px currentColor;color:#111;">Mode: <span style="font-weight:normal">[source]</span></div>
<div class="t" style="left:167.30px;top:312.17px;font-size:12.5px;font-weight:bold;-webkit-text-stroke:0.1px currentColor;color:#111;">Filter: <span style="font-weight:normal">sinc-M</span></div>
<div class="t" style="left:167.30px;top:327.27px;font-size:12.5px;font-weight:bold;-webkit-text-stroke:0.1px currentColor;color:#111;">Shaper: <span style="font-weight:normal">TPDF</span></div>
<div class="t" style="left:167.30px;top:342.17px;font-size:12.5px;font-weight:bold;-webkit-text-stroke:0.1px currentColor;color:#111;">Limited / Apod:</div>
<div class="a" style="left:750.4px;top:235.2px;width:13px;height:13px;box-sizing:border-box;border-radius:50%;border:1px solid #a9a9a9;background:#fff"></div>
<div class="a" style="left:754.1px;top:238.89999999999998px;width:5.6px;height:5.6px;border-radius:50%;background:#333"></div>
<div class="t" style="left:769.30px;top:232.20px;font-size:12.4px;color:#1d1d1d;">Time</div>
<div class="a" style="left:750.4px;top:267.7px;width:13px;height:13px;box-sizing:border-box;border-radius:50%;border:1px solid #a9a9a9;background:#fff"></div>
<div class="t" style="left:769.30px;top:264.70px;font-size:12.4px;color:#1d1d1d;">Remain</div>
<div class="a" style="left:750.4px;top:299.8px;width:13px;height:13px;box-sizing:border-box;border-radius:50%;border:1px solid #a9a9a9;background:#fff"></div>
<div class="t" style="left:769.30px;top:296.80px;font-size:12.4px;color:#1d1d1d;">Total remain</div>
<div class="a ck" style="left:750.8px;top:330.4px;"></div>
<div class="t" style="left:767.70px;top:326.40px;font-size:12.4px;color:#141414;">20 kHz filter</div>
<div class="a ck" style="left:750.8px;top:359.3px;"></div>
<div class="t" style="left:767.70px;top:355.70px;font-size:12.4px;color:#141414;">Adaptive gain</div>
<svg class="a" style="left:850px;top:220px" width="112" height="112" viewBox="850 220 112 112"><defs><radialGradient id="kg" cx="0.45" cy="0.3" r="0.75"><stop offset="0" stop-color="#fcfcfc"/><stop offset="0.7" stop-color="#ececec"/><stop offset="1" stop-color="#d6d6d6"/></radialGradient><radialGradient id="dg" cx="0.5" cy="0.4" r="0.6"><stop offset="0" stop-color="#d8d8d8"/><stop offset="1" stop-color="#bdbdbd"/></radialGradient></defs><line x1="885.30" y1="310.51" x2="881.80" y2="316.57" stroke="#a3a3a3" stroke-width="1"/><line x1="876.81" y1="303.99" x2="873.27" y2="307.53" stroke="#a3a3a3" stroke-width="1"/><line x1="870.29" y1="295.50" x2="865.96" y2="298.00" stroke="#a3a3a3" stroke-width="1"/><line x1="866.20" y1="285.61" x2="861.37" y2="286.91" stroke="#a3a3a3" stroke-width="1"/><line x1="864.80" y1="275.00" x2="859.80" y2="275.00" stroke="#a3a3a3" stroke-width="1"/><line x1="866.20" y1="264.39" x2="861.37" y2="263.09" stroke="#a3a3a3" stroke-width="1"/><line x1="870.29" y1="254.50" x2="865.96" y2="252.00" stroke="#a3a3a3" stroke-width="1"/><line x1="876.81" y1="246.01" x2="873.27" y2="242.47" stroke="#a3a3a3" stroke-width="1"/><line x1="885.30" y1="239.49" x2="882.80" y2="235.16" stroke="#a3a3a3" stroke-width="1"/><line x1="895.19" y1="235.40" x2="893.89" y2="230.57" stroke="#a3a3a3" stroke-width="1"/><line x1="905.80" y1="234.00" x2="905.80" y2="227.00" stroke="#a3a3a3" stroke-width="1"/><line x1="916.41" y1="235.40" x2="917.71" y2="230.57" stroke="#a3a3a3" stroke-width="1"/><line x1="926.30" y1="239.49" x2="928.80" y2="235.16" stroke="#a3a3a3" stroke-width="1"/><line x1="934.79" y1="246.01" x2="938.33" y2="242.47" stroke="#a3a3a3" stroke-width="1"/><line x1="941.31" y1="254.50" x2="945.64" y2="252.00" stroke="#a3a3a3" stroke-width="1"/><line x1="945.40" y1="264.39" x2="950.23" y2="263.09" stroke="#a3a3a3" stroke-width="1"/><line x1="946.80" y1="275.00" x2="951.80" y2="275.00" stroke="#a3a3a3" stroke-width="1"/><line x1="945.40" y1="285.61" x2="950.23" y2="286.91" stroke="#a3a3a3" stroke-width="1"/><line x1="941.31" y1="295.50" x2="945.64" y2="298.00" stroke="#a3a3a3" stroke-width="1"/><line x1="934.79" y1="303.99" x2="938.33" y2="307.53" stroke="#a3a3a3" stroke-width="1"/><line x1="926.30" y1="310.51" x2="929.80" y2="316.57" stroke="#a3a3a3" stroke-width="1"/><circle cx="905.8" cy="275" r="37.4" fill="url(#kg)" stroke="#5a5a5a" stroke-width="1"/><circle cx="930.9" cy="275" r="6.6" fill="url(#dg)" stroke="#8a8a8a" stroke-width="0.8"/></svg>
<div class="a" style="left:856.9px;top:329.2px;width:97px;height:48px;box-sizing:border-box;border:1px solid #c4c4c4;border-radius:3px;background:#fff"></div>
<div class="a" style="left:940px;top:330.2px;width:13px;height:46px;box-sizing:border-box;border-left:1px solid #d5d5d5;background:linear-gradient(#fafafa,#efefef);border-radius:0 3px 3px 0"></div>
<svg class="a" style="left:941px;top:330px" width="12" height="46" viewBox="0 0 12 46"><path d="M2.5 12.5L6 8.5L9.5 12.5Z" fill="#3a3a3a"/><path d="M2.5 33.5H9.5L6 37.5Z" fill="#3a3a3a"/></svg>
<div class="t" style="left:861.00px;top:343.24px;font-size:12.6px;color:#141414;">-4.0 dBFS</div>
<div class="a" style="left:9px;top:388.5px;width:945px;height:5px;box-sizing:border-box;border:1px solid #bdbdbd;border-radius:2.5px;background:linear-gradient(#d4d4d4,#e8e8e8)"></div>
<div class="a" style="left:9.2px;top:385.3px;width:12.6px;height:11.8px;box-sizing:border-box;border:1px solid #b0b0b0;border-radius:3px;background:linear-gradient(#ffffff,#f0f0f0)"></div>
<div class="a ed" style="left:8.7px;top:404.5px;width:864.5px;height:22px;"></div>
<div class="a" style="left:854.6px;top:405.5px;width:17.4px;height:20px;box-sizing:border-box;border-left:1px solid #d8d8d8;background:linear-gradient(#fbfbfb,#efefef);border-radius:0 3px 3px 0"></div>
<svg class="a" style="left:859.5px;top:413px" width="8" height="5" viewBox="0 0 8 5"><path d="M0.3 0.3H7.7L4 4.6Z" fill="#3a3a3a"/></svg>
<div class="t" style="left:11.80px;top:405.93px;font-size:12.3px;color:#b3b3b3;">Content source URI</div>
<div class="a cb" style="left:879.7px;top:404.5px;width:74px;height:22px;"></div>
<div class="t" style="left:890.30px;top:406.24px;font-size:12.6px;color:#141414;">Browse...</div>
<div class="a" style="left:8.5px;top:432.5px;width:945px;height:379px;box-sizing:border-box;border:1px solid #c8c8c8;background:#fff"></div>
<div class="a" style="left:9.5px;top:433.5px;width:943px;height:15px;box-sizing:border-box;border-bottom:1px solid #c4c4c4;background:linear-gradient(#f6f6f6,#e9e9e9)"></div>
<div class="a" style="left:23px;top:434px;width:1px;height:14px;background:#d6d6d6"></div>
<div class="a" style="left:63px;top:434px;width:1px;height:14px;background:#d6d6d6"></div>
<div class="t" style="left:13.30px;top:431.36px;font-size:11px;color:#222;">#</div>
<div class="t" style="left:26.40px;top:431.36px;font-size:11px;color:#222;">Length</div>
<div class="t" style="left:168.30px;top:431.36px;font-size:11px;color:#222;">Artist</div>
<div class="t" style="left:730.10px;top:431.36px;font-size:11px;color:#222;">Song</div>
<div class="a" style="left:262px;top:-8px;width:419px;height:989px;border-radius:10px;background:#ececec;box-shadow:0 0 0 0.5px rgba(0,0,0,0.22),0 12px 40px rgba(0,0,0,0.3),0 0 8px rgba(0,0,0,0.08)"></div>
<div class="a" style="left:262px;top:-8px;width:419px;height:28px;border-radius:10px 10px 0 0;background:#fdfdfd"></div>
<div class="a" style="left:262px;top:19.5px;width:419px;height:1px;background:#d7d7d7"></div>
<div class="a" style="left:269.3px;top:0.6px;width:12px;height:12px;border-radius:50%;background:#fe5f57;box-sizing:border-box;border:0.5px solid #e0443e"></div>
<div class="a" style="left:287.7px;top:0.6px;width:12px;height:12px;border-radius:50%;background:#dcdcdc;box-sizing:border-box;border:0.5px solid #cfcfcf"></div>
<div class="a" style="left:306.8px;top:0.6px;width:12px;height:12px;border-radius:50%;background:#28c840;box-sizing:border-box;border:0.5px solid #1aab29"></div>
<div class="t" style="left:444.90px;top:-3.90px;font-size:12.7px;font-weight:bold;-webkit-text-stroke:0.1px currentColor;color:#3b3b3b;">Settings</div>
<div class="a" style="left:272px;top:30px;width:398.5px;height:912px;background:#e9e9e9;border:1px solid #d6d6d6;box-sizing:border-box;border-radius:2px"></div>
<div class="t" style="left:280.30px;top:38.84px;font-size:12.6px;color:#141414;">CD drive</div>
<div class="a ed" style="left:281px;top:63.5px;width:380.20000000000005px;height:21.5px;"></div>
<div class="a" style="left:642.5px;top:64.5px;width:17.700000000000045px;height:19.5px;background:linear-gradient(#fbfbfb,#efefef);border-left:1px solid #dadada;border-radius:0 3px 3px 0"></div>
<svg class="a" style="left:647.85px;top:71.75px" width="8" height="5" viewBox="0 0 8 5"><path d="M0.3 0.3H7.7L4 4.6Z" fill="#3a3a3a"/></svg>
<div class="t" style="left:280.30px;top:89.84px;font-size:12.6px;color:#141414;">Output Device Settings</div>
<div class="a" style="left:282px;top:110px;width:379.5px;height:211.5px;background:#e4e4e4;border:1px solid #d2d2d2;box-sizing:border-box;border-radius:2px"></div>
<div class="t" style="left:291.80px;top:118.34px;font-size:12.6px;color:#141414;">Backend</div>
<div class="a cb" style="left:292.5px;top:141.3px;width:358.5px;height:21.5px;"></div>
<div class="t" style="left:297.10px;top:143.09px;font-size:12.75px;color:#141414;">NetworkAudioAdapter</div>
<svg class="a" style="left:636.5px;top:149.25px" width="8" height="5" viewBox="0 0 8 5"><path d="M0.5 0.3H7.5L4 4.5Z" fill="#3a3a3a"/></svg>
<div class="t" style="left:291.80px;top:166.84px;font-size:12.6px;color:#141414;">Device</div>
<div class="a cb" style="left:292.5px;top:190.5px;width:358.5px;height:21.0px;"></div>
<div class="t" style="left:297.10px;top:192.29px;font-size:12.75px;color:#141414;">ifi: SACD 30n: USB Audio</div>
<svg class="a" style="left:636.5px;top:198.2px" width="8" height="5" viewBox="0 0 8 5"><path d="M0.5 0.3H7.5L4 4.5Z" fill="#3a3a3a"/></svg>
<div class="t" style="left:291.80px;top:216.34px;font-size:12.6px;color:#141414;">Channels</div>
<div class="t" style="left:382.90px;top:216.34px;font-size:12.6px;color:#141414;">Ch. offset</div>
<div class="t" style="left:473.80px;top:216.34px;font-size:12.6px;color:#141414;">SDM Pack</div>
<div class="a cb" style="left:292.5px;top:240px;width:85.0px;height:21.5px;"></div>
<div class="t" style="left:297.10px;top:241.79px;font-size:12.75px;color:#141414;">2</div>
<svg class="a" style="left:363.0px;top:247.95px" width="8" height="5" viewBox="0 0 8 5"><path d="M0.5 0.3H7.5L4 4.5Z" fill="#3a3a3a"/></svg>
<div class="a ed" style="left:383.6px;top:240px;width:84.39999999999998px;height:21.5px;"></div>
<div class="a" style="left:454.4px;top:241px;width:12.600000000000023px;height:19.5px;background:linear-gradient(#fafafa,#eeeeee);border-left:1px solid #d8d8d8;border-radius:0 3px 3px 0"></div>
<svg class="a" style="left:456.2px;top:242.75px" width="10" height="16" viewBox="0 0 10 16"><path d="M1.8 5.6L5 2.2L8.2 5.6Z" fill="#9a9a9a"/><path d="M1.8 10H8.2L5 13.4Z" fill="#9a9a9a"/></svg>
<div class="t" style="left:388.20px;top:241.29px;font-size:12.75px;color:#b0b0b0;">0</div>
<div class="a cb" style="left:474.6px;top:240px;width:84.79999999999995px;height:21.5px;"></div>
<div class="t" style="left:479.20px;top:241.79px;font-size:12.75px;color:#141414;">none</div>
<svg class="a" style="left:544.9px;top:247.95px" width="8" height="5" viewBox="0 0 8 5"><path d="M0.5 0.3H7.5L4 4.5Z" fill="#3a3a3a"/></svg>
<div class="a ck" style="left:566px;top:234.5px;"></div>
<div class="t" style="left:582.30px;top:230.34px;font-size:12.6px;color:#141414;">2wire</div>
<div class="t" style="left:291.80px;top:265.54px;font-size:12.6px;color:#141414;">Buffer time</div>
<div class="t" style="left:382.90px;top:265.54px;font-size:12.6px;color:#141414;">DAC bits</div>
<div class="a cb" style="left:292.5px;top:288.6px;width:85.0px;height:21.899999999999977px;"></div>
<div class="t" style="left:297.10px;top:290.39px;font-size:12.75px;color:#141414;">Default</div>
<svg class="a" style="left:363.0px;top:296.75px" width="8" height="5" viewBox="0 0 8 5"><path d="M0.5 0.3H7.5L4 4.5Z" fill="#3a3a3a"/></svg>
<div class="a cb" style="left:383.6px;top:288.6px;width:84.39999999999998px;height:21.899999999999977px;"></div>
<div class="t" style="left:388.20px;top:290.39px;font-size:12.75px;color:#141414;">Default</div>
<svg class="a" style="left:453.5px;top:296.75px" width="8" height="5" viewBox="0 0 8 5"><path d="M0.5 0.3H7.5L4 4.5Z" fill="#3a3a3a"/></svg>
<div class="a ck" style="left:474.6px;top:284px;"></div>
<div class="t" style="left:491.10px;top:280.34px;font-size:12.6px;color:#141414;">48k DSD</div>
<div class="a ck" style="left:566px;top:284px;"></div>
<div class="t" style="left:582.30px;top:280.34px;font-size:12.6px;color:#141414;">Short buf</div>
<div class="t" style="left:280.30px;top:326.34px;font-size:12.6px;color:#141414;">Input Device Settings</div>
<div class="a" style="left:282px;top:347.5px;width:379.5px;height:165.5px;background:#e4e4e4;border:1px solid #d2d2d2;box-sizing:border-box;border-radius:2px"></div>
<div class="t" style="left:291.80px;top:354.84px;font-size:12.6px;color:#141414;">Backend</div>
<div class="a cb" style="left:292.5px;top:378px;width:358.5px;height:21.5px;"></div>
<div class="t" style="left:297.10px;top:379.79px;font-size:12.75px;color:#141414;">CoreAudio</div>
<svg class="a" style="left:636.5px;top:385.95px" width="8" height="5" viewBox="0 0 8 5"><path d="M0.5 0.3H7.5L4 4.5Z" fill="#3a3a3a"/></svg>
<div class="t" style="left:291.80px;top:403.04px;font-size:12.6px;color:#141414;">Device</div>
<div class="a cb" style="left:292.5px;top:426.7px;width:358.5px;height:21.600000000000023px;"></div>
<div class="t" style="left:297.10px;top:428.49px;font-size:12.75px;color:#141414;">Default</div>
<svg class="a" style="left:636.5px;top:434.7px" width="8" height="5" viewBox="0 0 8 5"><path d="M0.5 0.3H7.5L4 4.5Z" fill="#3a3a3a"/></svg>
<div class="t" style="left:291.80px;top:453.84px;font-size:12.6px;color:#141414;">Ch. offset</div>
<div class="t" style="left:383.00px;top:453.84px;font-size:12.6px;color:#141414;">Buffer time</div>
<div class="t" style="left:473.90px;top:453.84px;font-size:12.6px;color:#141414;">SDM Pack</div>
<div class="a ed" style="left:292.5px;top:479.7px;width:84.69999999999999px;height:20.80000000000001px;"></div>
<div class="a" style="left:363.4px;top:480.7px;width:12.800000000000011px;height:18.80000000000001px;background:linear-gradient(#fafafa,#eeeeee);border-left:1px solid #d8d8d8;border-radius:0 3px 3px 0"></div>
<svg class="a" style="left:365.29999999999995px;top:482.1px" width="10" height="16" viewBox="0 0 10 16"><path d="M1.8 5.6L5 2.2L8.2 5.6Z" fill="#3a3a3a"/><path d="M1.8 10H8.2L5 13.4Z" fill="#3a3a3a"/></svg>
<div class="t" style="left:297.10px;top:480.99px;font-size:12.75px;color:#141414;">0</div>
<div class="a cb" style="left:383.7px;top:479.7px;width:84.40000000000003px;height:21.30000000000001px;"></div>
<div class="t" style="left:388.30px;top:481.49px;font-size:12.75px;color:#b4b4b4;">Default</div>
<svg class="a" style="left:453.6px;top:487.55px" width="8" height="5" viewBox="0 0 8 5"><path d="M0.5 0.3H7.5L4 4.5Z" fill="#8a8a8a"/></svg>
<div class="a cb" style="left:474.6px;top:479.7px;width:84.79999999999995px;height:21.30000000000001px;"></div>
<div class="t" style="left:479.20px;top:481.49px;font-size:12.75px;color:#141414;">DoP</div>
<svg class="a" style="left:544.9px;top:487.55px" width="8" height="5" viewBox="0 0 8 5"><path d="M0.5 0.3H7.5L4 4.5Z" fill="#3a3a3a"/></svg>
<div class="a ck" style="left:566px;top:459.5px;"></div>
<div class="t" style="left:582.30px;top:455.34px;font-size:12.6px;color:#141414;">2wire</div>
<div class="a ck" style="left:566px;top:485.3px;"></div>
<div class="t" style="left:582.30px;top:481.14px;font-size:12.6px;color:#141414;">Short buf</div>
<div class="t" style="left:280.30px;top:517.24px;font-size:12.6px;color:#141414;">Default Output Mode</div>
<div class="a cb" style="left:281.5px;top:543px;width:380.1px;height:21.600000000000023px;"></div>
<div class="t" style="left:286.10px;top:544.79px;font-size:12.75px;color:#141414;">[source]</div>
<svg class="a" style="left:647.1px;top:551.0px" width="8" height="5" viewBox="0 0 8 5"><path d="M0.5 0.3H7.5L4 4.5Z" fill="#3a3a3a"/></svg>
<div class="t" style="left:280.30px;top:567.64px;font-size:12.6px;color:#141414;">PCM Defaults</div>
<div class="t" style="left:471.70px;top:567.64px;font-size:12.6px;color:#141414;">SDM Defaults</div>
<div class="a" style="left:282.4px;top:589.6px;width:184.40000000000003px;height:210.39999999999998px;background:#e4e4e4;border:1px solid #d2d2d2;box-sizing:border-box;border-radius:2px"></div>
<div class="a" style="left:474.1px;top:589.6px;width:187.5px;height:210.39999999999998px;background:#e4e4e4;border:1px solid #d2d2d2;box-sizing:border-box;border-radius:2px"></div>
<div class="t" style="left:291.60px;top:597.34px;font-size:12.6px;color:#141414;">Filter 1x</div>
<div class="a cb" style="left:292.3px;top:620.2px;width:162.89999999999998px;height:22.399999999999977px;"></div>
<div class="t" style="left:296.90px;top:621.99px;font-size:12.75px;color:#141414;">sinc-M</div>
<svg class="a" style="left:440.7px;top:628.6000000000001px" width="8" height="5" viewBox="0 0 8 5"><path d="M0.5 0.3H7.5L4 4.5Z" fill="#3a3a3a"/></svg>
<div class="t" style="left:483.30px;top:597.34px;font-size:12.6px;color:#141414;">Oversampling 1x</div>
<div class="a cb" style="left:484px;top:620.2px;width:166.79999999999995px;height:22.399999999999977px;"></div>
<div class="t" style="left:488.60px;top:621.99px;font-size:12.75px;color:#141414;">poly-sinc-short-mp</div>
<svg class="a" style="left:636.3px;top:628.6000000000001px" width="8" height="5" viewBox="0 0 8 5"><path d="M0.5 0.3H7.5L4 4.5Z" fill="#3a3a3a"/></svg>
<div class="t" style="left:291.60px;top:646.94px;font-size:12.6px;color:#141414;">Filter Nx</div>
<div class="a cb" style="left:292.3px;top:668.8px;width:162.89999999999998px;height:22.40000000000009px;"></div>
<div class="t" style="left:296.90px;top:670.59px;font-size:12.75px;color:#141414;">sinc-M</div>
<svg class="a" style="left:440.7px;top:677.2px" width="8" height="5" viewBox="0 0 8 5"><path d="M0.5 0.3H7.5L4 4.5Z" fill="#3a3a3a"/></svg>
<div class="t" style="left:483.30px;top:646.94px;font-size:12.6px;color:#141414;">Oversampling Nx</div>
<div class="a cb" style="left:484px;top:668.8px;width:166.79999999999995px;height:22.40000000000009px;"></div>
<div class="t" style="left:488.60px;top:670.59px;font-size:12.75px;color:#141414;">poly-sinc-short-mp</div>
<svg class="a" style="left:636.3px;top:677.2px" width="8" height="5" viewBox="0 0 8 5"><path d="M0.5 0.3H7.5L4 4.5Z" fill="#3a3a3a"/></svg>
<div class="t" style="left:291.60px;top:695.64px;font-size:12.6px;color:#141414;">Dither</div>
<div class="a cb" style="left:292.3px;top:718px;width:162.89999999999998px;height:22px;"></div>
<div class="t" style="left:296.90px;top:719.79px;font-size:12.75px;color:#141414;">TPDF</div>
<svg class="a" style="left:440.7px;top:726.2px" width="8" height="5" viewBox="0 0 8 5"><path d="M0.5 0.3H7.5L4 4.5Z" fill="#3a3a3a"/></svg>
<div class="t" style="left:483.30px;top:695.64px;font-size:12.6px;color:#141414;">Modulator</div>
<div class="a cb" style="left:484px;top:718px;width:166.79999999999995px;height:22px;"></div>
<div class="t" style="left:488.60px;top:719.79px;font-size:12.75px;color:#141414;">DSD5</div>
<svg class="a" style="left:636.3px;top:726.2px" width="8" height="5" viewBox="0 0 8 5"><path d="M0.5 0.3H7.5L4 4.5Z" fill="#3a3a3a"/></svg>
<div class="t" style="left:291.60px;top:743.84px;font-size:12.6px;color:#141414;">Sample rate (/ Limit)</div>
<div class="a cb" style="left:292.3px;top:766.6px;width:162.89999999999998px;height:22.399999999999977px;"></div>
<div class="t" style="left:296.90px;top:768.39px;font-size:12.75px;color:#141414;">352.8k</div>
<svg class="a" style="left:440.7px;top:775.0px" width="8" height="5" viewBox="0 0 8 5"><path d="M0.5 0.3H7.5L4 4.5Z" fill="#3a3a3a"/></svg>
<div class="t" style="left:483.30px;top:743.84px;font-size:12.6px;color:#141414;">Bit rate (/ Limit)</div>
<div class="a cb" style="left:484px;top:766.6px;width:166.79999999999995px;height:22.399999999999977px;"></div>
<div class="t" style="left:488.60px;top:768.39px;font-size:12.75px;color:#141414;">44.1k x64</div>
<svg class="a" style="left:636.3px;top:775.0px" width="8" height="5" viewBox="0 0 8 5"><path d="M0.5 0.3H7.5L4 4.5Z" fill="#3a3a3a"/></svg>
<div class="t" style="left:280.80px;top:805.24px;font-size:12.6px;color:#141414;">Vol Min</div>
<div class="t" style="left:473.90px;top:805.24px;font-size:12.6px;color:#141414;">Vol Max</div>
<div class="a ed" style="left:281.5px;top:831px;width:186.60000000000002px;height:20.700000000000045px;"></div>
<div class="a" style="left:453.9px;top:832px;width:13.200000000000045px;height:18.700000000000045px;background:linear-gradient(#fafafa,#eeeeee);border-left:1px solid #d8d8d8;border-radius:0 3px 3px 0"></div>
<svg class="a" style="left:456.0px;top:833.35px" width="10" height="16" viewBox="0 0 10 16"><path d="M1.8 5.6L5 2.2L8.2 5.6Z" fill="#3a3a3a"/><path d="M1.8 10H8.2L5 13.4Z" fill="#3a3a3a"/></svg>
<div class="t" style="left:286.10px;top:832.29px;font-size:12.75px;color:#141414;">-20.0dB</div>
<div class="a ed" style="left:474.6px;top:831px;width:187.0px;height:20.700000000000045px;"></div>
<div class="a" style="left:647.8px;top:832px;width:12.800000000000068px;height:18.700000000000045px;background:linear-gradient(#fafafa,#eeeeee);border-left:1px solid #d8d8d8;border-radius:0 3px 3px 0"></div>
<svg class="a" style="left:649.7px;top:833.35px" width="10" height="16" viewBox="0 0 10 16"><path d="M1.8 5.6L5 2.2L8.2 5.6Z" fill="#3a3a3a"/><path d="M1.8 10H8.2L5 13.4Z" fill="#3a3a3a"/></svg>
<div class="t" style="left:479.20px;top:832.29px;font-size:12.75px;color:#141414;">0.0dB</div>
<div class="a ck" style="left:281.5px;top:862.5px;"></div>
<div class="a" style="left:283.5px;top:864.5px;width:9px;height:9px;background:linear-gradient(#8a8a8a,#666);border:0.5px solid #555;box-sizing:border-box"></div>
<div class="t" style="left:298.10px;top:859.34px;font-size:12.6px;color:#141414;">Multicore DSP</div>
<div class="a ck" style="left:281.5px;top:889.2px;"></div>
<div class="t" style="left:298.10px;top:885.84px;font-size:12.6px;color:#141414;">Adaptive output rate</div>
<div class="a ck" style="left:474.6px;top:889.2px;"></div>
<div class="t" style="left:492.00px;top:885.84px;font-size:12.6px;color:#141414;">Quick pause</div>
<div class="a ck" style="left:281.5px;top:916.5px;"></div>
<div class="t" style="left:298.10px;top:913.14px;font-size:12.6px;color:#141414;">Log file</div>
<div class="a ed" style="left:474.6px;top:912.7px;width:186.79999999999995px;height:20.5px;"></div>
<div class="a" style="left:648px;top:913.7px;width:12.399999999999977px;height:18.5px;background:linear-gradient(#fafafa,#eeeeee);border-left:1px solid #d8d8d8;border-radius:0 3px 3px 0"></div>
<svg class="a" style="left:649.7px;top:914.95px" width="10" height="16" viewBox="0 0 10 16"><path d="M1.8 5.6L5 2.2L8.2 5.6Z" fill="#3a3a3a"/><path d="M1.8 10H8.2L5 13.4Z" fill="#3a3a3a"/></svg>
<div class="t" style="left:479.20px;top:913.99px;font-size:12.75px;color:#141414;">0.00</div>
<div class="a cb" style="left:515.4px;top:949.6px;width:74.2px;height:21.2px;"></div>
<div class="t" style="left:532.50px;top:951.04px;font-size:12.6px;color:#141414;">Cancel</div>
<div class="a" style="left:595.8px;top:949.6px;width:74.5px;height:21.2px;box-sizing:border-box;border:1px solid #7ea7d8;border-radius:3.5px;background:linear-gradient(#fbfcfe,#eef1f6);box-shadow:0 0 0 0.5px #a9c4e6"></div>
<div class="t" style="left:623.80px;top:951.04px;font-size:12.6px;color:#141414;">OK</div>
</body></html>
